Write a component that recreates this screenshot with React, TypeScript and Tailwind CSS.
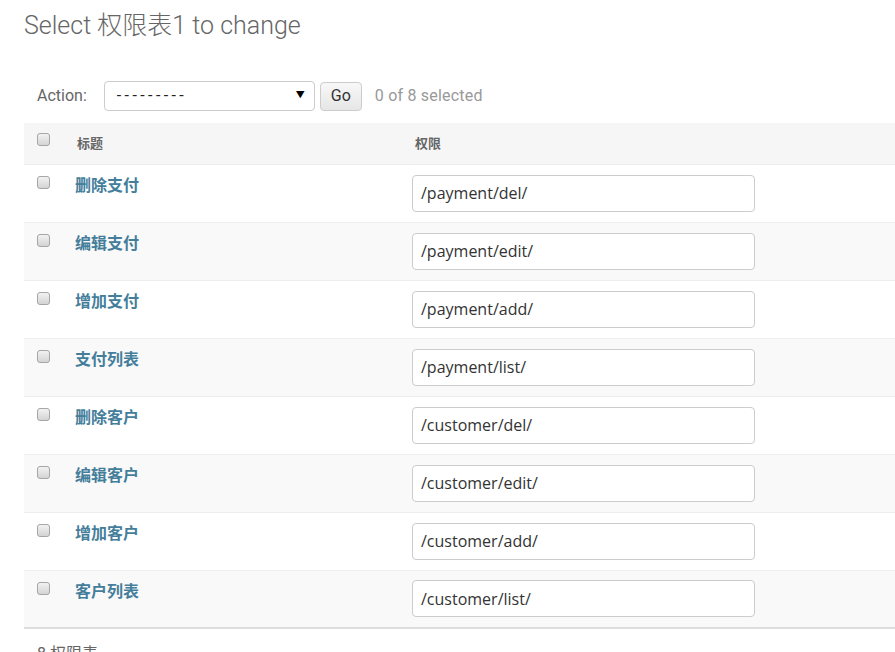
const rows = [
  { title: '删除支付', url: '/payment/del/' },
  { title: '编辑支付', url: '/payment/edit/' },
  { title: '增加支付', url: '/payment/add/' },
  { title: '支付列表', url: '/payment/list/' },
  { title: '删除客户', url: '/customer/del/' },
  { title: '编辑客户', url: '/customer/edit/' },
  { title: '增加客户', url: '/customer/add/' },
  { title: '客户列表', url: '/customer/list/' },
];

const font = { fontFamily: 'Roboto, "Noto Sans CJK SC", sans-serif' };

function Checkbox() {
  return (
    <span className="block w-[13px] h-[13px] rounded-[3px] border border-[#a6a6a6] bg-gradient-to-b from-[#f2f2f2] to-[#d4d4d4]" />
  );
}

export default function App() {
  return (
    <div className="min-h-[652px] bg-white pl-[24px] overflow-hidden" style={font}>
      <h1 className="pt-[10px] text-[25px] leading-[32px] font-light text-[#666]">
        Select 权限表1 to change
      </h1>

      <div className="mt-[39px] flex items-center h-[30px] pl-[13px] text-[16px] text-[#666]">
        <span>Action:</span>
        <div className="ml-[17px] w-[211px] h-[30px] border border-[#ccc] rounded-[4px] flex items-center justify-between pl-[12px] pr-[9px] text-[#222]">
          <span className="tracking-[3.4px] text-[16px] leading-none">---------</span>
          <span className="text-[9px] text-black">▼</span>
        </div>
        <button className="ml-[5px] h-[29px] px-[10px] border border-[#ccc] rounded-[4px] bg-gradient-to-b from-[#f8f8f8] to-[#e6e6e6] text-[#333] text-[16px]">
          Go
        </button>
        <span className="ml-[13px] text-[#999] tracking-[0.2px]">0 of 8 selected</span>
      </div>

      <table className="mt-[12px] w-[871px] border-collapse border-b-2 border-[#ddd]">
        <thead>
          <tr className="h-[41px] bg-[#f6f6f6] border-b border-[#eee]">
            <th className="w-[43px] pl-[13px] pt-[10px] text-left align-top">
              <Checkbox />
            </th>
            <th className="w-[337px] pl-[10px] text-left text-[13px] font-bold text-[#666]">标题</th>
            <th className="pl-[11px] text-left text-[13px] font-bold text-[#666]">权限</th>
          </tr>
        </thead>
        <tbody>
          {rows.map((r, i) => (
            <tr
              key={r.url}
              className={`h-[58px] border-b border-[#eee] ${i % 2 === 1 ? 'bg-[#f9f9f9]' : 'bg-white'}`}
            >
              <td className="pl-[13px] align-top pt-[11px]">
                <Checkbox />
              </td>
              <td className="pl-[8px] align-top pt-[9px]">
                <a className="text-[16px] font-bold text-[#447e9b]">{r.title}</a>
              </td>
              <td className="pl-[8px] align-middle">
                <div
                  className="w-[343px] h-[37px] border border-[#ccc] rounded-[4px] bg-white flex items-center pl-[8px] text-[16px] text-[#333]"
                  style={{ fontFamily: '"Open Sans", "Noto Sans", sans-serif' }}
                >
                  {r.url}
                </div>
              </td>
            </tr>
          ))}
        </tbody>
      </table>

      <p className="mt-[13px] pl-[13px] text-[16px] text-[#666]">8 权限表</p>
    </div>
  );
}
